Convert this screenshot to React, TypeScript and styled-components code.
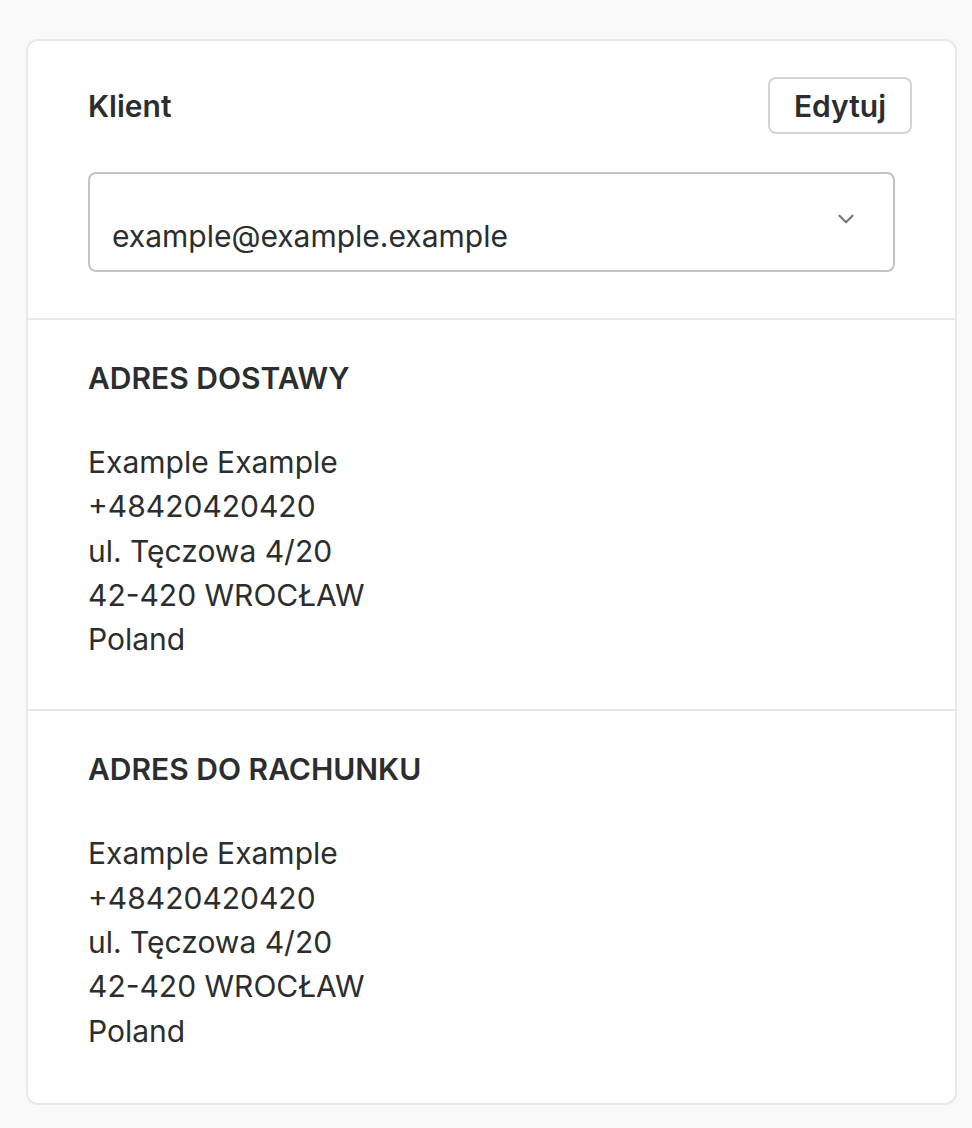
import styled, { createGlobalStyle } from 'styled-components';
import { ChevronDown } from 'lucide-react';

const GlobalStyle = createGlobalStyle`
  html, body {
    margin: 0;
    padding: 0;
    background: #f9f9f9;
    font-family: Inter, "Noto Sans", sans-serif;
    color: #2b2d2e;
  }
`;

const Page = styled.div`
  padding: 39px 16px 24px 26px;
`;

const Card = styled.div`
  width: 931px;
  box-sizing: border-box;
  background: #ffffff;
  border: 2px solid #e8e8e8;
  border-radius: 12px;
`;

const Section = styled.section<{ $last?: boolean }>`
  padding: 38px 43px ${p => (p.$last ? '50px' : '48px')} 60px;
  border-bottom: ${p => (p.$last ? 'none' : '2px solid #e8e8e8')};
`;

const TopSection = styled(Section)`
  padding-top: 36px;
  padding-bottom: 46px;
`;

const HeaderRow = styled.div`
  display: flex;
  justify-content: space-between;
  align-items: center;
  margin-bottom: 38px;
`;

const Title = styled.h2`
  margin: 0;
  font-size: 30px;
  font-weight: 600;
  line-height: 40px;
`;

const SectionTitle = styled.h3`
  margin: 0 0 42px;
  font-size: 30px;
  font-weight: 600;
  line-height: 40px;
  text-transform: uppercase;
`;

const EditButton = styled.button`
  font-family: inherit;
  font-size: 30px;
  font-weight: 600;
  color: #2b2d2e;
  background: #fff;
  border: 2px solid #d4d4d4;
  border-radius: 8px;
  height: 57px;
  padding: 0 24px;
  cursor: pointer;
`;

const Select = styled.div`
  display: flex;
  align-items: flex-end;
  height: 100px;
  box-sizing: border-box;
  margin-right: 17px;
  padding: 0 40px 14px 22px;
  border: 2px solid #c4c4c4;
  border-radius: 8px;
  font-size: 30px;
  line-height: 40px;
  position: relative;
`;

const Chevron = styled.span`
  position: absolute;
  right: 34px;
  top: 32px;
  color: #777;
  display: flex;
`;

const Address = styled.div`
  font-size: 30px;
  line-height: 44.3px;
`;

function AddressBlock({ title, lines, last }: { title: string; lines: string[]; last?: boolean }) {
  return (
    <Section $last={last}>
      <SectionTitle>{title}</SectionTitle>
      <Address>
        {lines.map(l => (
          <div key={l}>{l}</div>
        ))}
      </Address>
    </Section>
  );
}

const lines = ['Example Example', '+48420420420', 'ul. Tęczowa 4/20', '42-420 WROCŁAW', 'Poland'];

export default function App() {
  return (
    <Page>
      <GlobalStyle />
      <Card>
        <TopSection>
          <HeaderRow>
            <Title>Klient</Title>
            <EditButton>Edytuj</EditButton>
          </HeaderRow>
          <Select>
            <span>example@example.example</span>
            <Chevron>
              <ChevronDown size={26} strokeWidth={2} />
            </Chevron>
          </Select>
        </TopSection>
        <AddressBlock title="Adres dostawy" lines={lines} />
        <AddressBlock title="Adres do rachunku" lines={lines} last />
      </Card>
    </Page>
  );
}
